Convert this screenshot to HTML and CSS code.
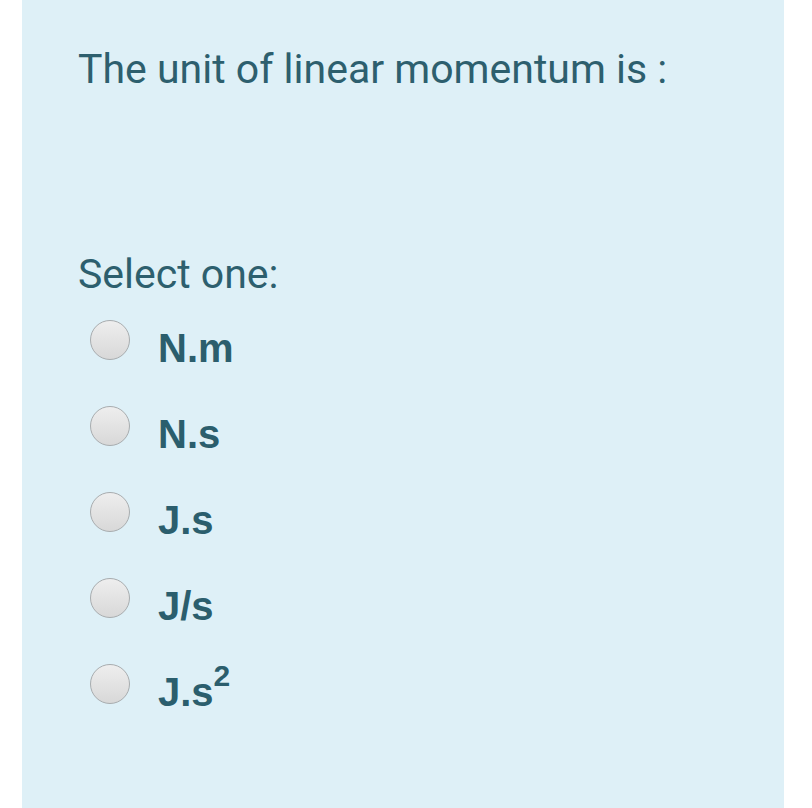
FILE: index.html
```html
<!DOCTYPE html>
<html>
<head>
<meta charset="utf-8">
<link rel="stylesheet" href="styles.css">
</head>
<body>
<div class="panel">
  <div class="question">The unit of linear momentum is :</div>
  <div class="prompt">Select one:</div>
  <div class="options">
    <label class="option"><span class="radio"></span><span class="label">N.m</span></label>
    <label class="option"><span class="radio"></span><span class="label">N.s</span></label>
    <label class="option"><span class="radio"></span><span class="label">J.s</span></label>
    <label class="option"><span class="radio"></span><span class="label">J/s</span></label>
    <label class="option"><span class="radio"></span><span class="label">J.s<sup>2</sup></span></label>
  </div>
</div>
</body>
</html>
```
FILE: styles.css
```css
html, body {
  margin: 0;
  padding: 0;
  background: #ffffff;
}
body {
  width: 812px;
  height: 808px;
  overflow: hidden;
}
.panel {
  margin-left: 22px;
  width: 762px;
  height: 808px;
  background: #def0f7;
  box-sizing: border-box;
  padding: 45px 0 0 56px;
  color: #2d5f6e;
}
.question {
  font-family: Roboto, "Liberation Sans", sans-serif;
  font-size: 41px;
  line-height: 48px;
}
.prompt {
  font-family: Roboto, "Liberation Sans", sans-serif;
  font-size: 41px;
  line-height: 48px;
  margin-top: 157px;
}
.options {
  display: flex;
  flex-direction: column;
  margin-top: -1px;
  padding-left: 12px;
}
.option {
  display: flex;
  align-items: center;
  height: 86px;
  gap: 28px;
}
.radio {
  width: 40px;
  height: 40px;
  box-sizing: border-box;
  border-radius: 50%;
  border: 1.5px solid #a8acae;
  background: linear-gradient(#eeeeee, #d8d8d8);
  flex: none;
}
.label {
  font-family: "Liberation Sans", Arial, sans-serif;
  font-weight: bold;
  font-size: 40px;
  line-height: 46px;
  padding-top: 16px;
  color: #2b5e6d;
}
.label sup {
  font-size: 30px;
  line-height: 0;
  vertical-align: 20px;
}
```
